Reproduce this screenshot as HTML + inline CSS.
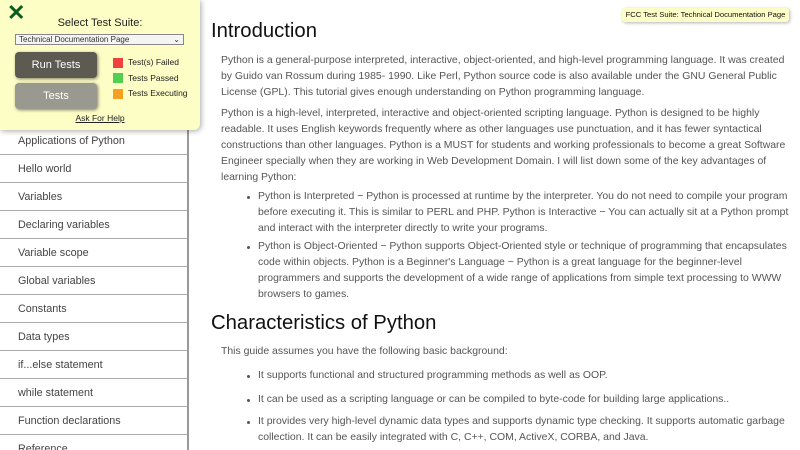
<!DOCTYPE html>
<html style="overflow:hidden"><head><meta charset="utf-8"><style>
*{margin:0;padding:0;box-sizing:border-box}
html,body{width:800px;height:450px;overflow:hidden}
body{background:#fff;font-family:"Liberation Sans",Arial,sans-serif;position:relative}
#nav{position:absolute;left:0;top:0;width:189px;height:450px;border-right:2px solid #999;background:#fff;overflow:hidden}
#nav .hd{position:absolute;left:0;top:8px;width:187px;text-align:center;color:#ccc;font-size:20px;line-height:22px}
.it{position:absolute;left:0;width:187px;height:28px;border-bottom:1px solid #aaa;color:#444;font-size:10.8px;line-height:28px;padding-left:18px}
.l{position:absolute;white-space:nowrap;color:#555;font-size:10.45px;line-height:16px}
.h{position:absolute;left:211px;color:#111;font-size:20.3px;line-height:26px}
.b{position:absolute;width:3px;height:3px;border-radius:50%;background:#555}
#fcc{position:absolute;left:0;top:0;width:200px;height:130px;background:#fdfdc6;box-shadow:1px 1px 6px rgba(0,0,0,.35);border-radius:0 0 6px 0}
.btn{position:absolute;left:15px;width:82px;height:26px;border-radius:4px;color:#fff;font-size:11px;text-align:center;line-height:26px;box-shadow:1px 1px 3px rgba(0,0,0,.5)}
.sq{position:absolute;left:113px;width:10px;height:10px}
.lg{position:absolute;left:128px;font-size:8.5px;color:#222;line-height:10px}
</style></head><body>
<div id="nav">
<div class="hd">PYTHON<br>Documentation</div>
<div class="it" style="top:71px">Introduction</div>
<div class="it" style="top:99px">Characteristics of Python</div>
<div class="it" style="top:127px">Applications of Python</div>
<div class="it" style="top:155px">Hello world</div>
<div class="it" style="top:183px">Variables</div>
<div class="it" style="top:211px">Declaring variables</div>
<div class="it" style="top:239px">Variable scope</div>
<div class="it" style="top:267px">Global variables</div>
<div class="it" style="top:295px">Constants</div>
<div class="it" style="top:323px">Data types</div>
<div class="it" style="top:351px">if...else statement</div>
<div class="it" style="top:379px">while statement</div>
<div class="it" style="top:407px">Function declarations</div>
<div class="it" style="top:435px">Reference</div>
</div>
<div id="fcc">
<div style="position:absolute;left:7px;top:2px;color:#0b5d1e;font-size:22px;font-weight:bold;line-height:22px">✕</div>
<div style="position:absolute;left:0;width:200px;top:17px;text-align:center;font-size:11px;color:#222">Select Test Suite:</div>
<div style="position:absolute;left:15px;top:34px;width:169px;height:11px;border:1px solid #888;background:#f4f4f4;font-size:8px;line-height:9px;padding-left:3px;color:#333">Technical Documentation Page<span style="position:absolute;right:3px">⌄</span></div>
<div class="btn" style="top:52px;background:#5c5a51">Run Tests</div>
<div class="btn" style="top:83px;background:#9a9990">Tests</div>
<div class="sq" style="top:58px;background:#f04040"></div><div class="lg" style="top:57px">Test(s) Failed</div>
<div class="sq" style="top:73px;background:#50d050"></div><div class="lg" style="top:73px">Tests Passed</div>
<div class="sq" style="top:89px;background:#f5a020"></div><div class="lg" style="top:88px">Tests Executing</div>
<div style="position:absolute;left:0;width:200px;top:113px;text-align:center;font-size:8.5px;text-decoration:underline;color:#222">Ask For Help</div>
</div>
<div style="position:absolute;left:622px;top:8px;width:167px;height:14px;background:#fdfdc6;border-radius:3px;box-shadow:1px 1px 3px rgba(0,0,0,.3);font-size:7.6px;line-height:14px;text-align:center;color:#111;white-space:nowrap">FCC Test Suite: Technical Documentation Page</div>

<div class="h" style="top:18px">Introduction</div>
<div class="l" style="left:221px;top:53px">Python is a general-purpose interpreted, interactive, object-oriented, and high-level programming language. It was created</div>
<div class="l" style="left:221px;top:69px">by Guido van Rossum during 1985- 1990. Like Perl, Python source code is also available under the GNU General Public</div>
<div class="l" style="left:221px;top:85px">License (GPL). This tutorial gives enough understanding on Python programming language.</div>
<div class="l" style="left:221px;top:106px">Python is a high-level, interpreted, interactive and object-oriented scripting language. Python is designed to be highly</div>
<div class="l" style="left:221px;top:122px">readable. It uses English keywords frequently where as other languages use punctuation, and it has fewer syntactical</div>
<div class="l" style="left:221px;top:138px">constructions than other languages. Python is a MUST for students and working professionals to become a great Software</div>
<div class="l" style="left:221px;top:154px">Engineer specially when they are working in Web Development Domain. I will list down some of the key advantages of</div>
<div class="l" style="left:221px;top:170px">learning Python:</div>
<div class="b" style="left:247px;top:196px"></div>
<div class="l" style="left:258px;top:189px">Python is Interpreted − Python is processed at runtime by the interpreter. You do not need to compile your program</div>
<div class="l" style="left:258px;top:205px">before executing it. This is similar to PERL and PHP. Python is Interactive − You can actually sit at a Python prompt</div>
<div class="l" style="left:258px;top:221px">and interact with the interpreter directly to write your programs.</div>
<div class="b" style="left:247px;top:246px"></div>
<div class="l" style="left:258px;top:239px">Python is Object-Oriented − Python supports Object-Oriented style or technique of programming that encapsulates</div>
<div class="l" style="left:258px;top:255px">code within objects. Python is a Beginner's Language − Python is a great language for the beginner-level</div>
<div class="l" style="left:258px;top:271px">programmers and supports the development of a wide range of applications from simple text processing to WWW</div>
<div class="l" style="left:258px;top:287px">browsers to games.</div>
<div class="h" style="top:310px">Characteristics of Python</div>
<div class="l" style="left:221px;top:344px">This guide assumes you have the following basic background:</div>
<div class="b" style="left:247px;top:375px"></div>
<div class="l" style="left:258px;top:368px">It supports functional and structured programming methods as well as OOP.</div>
<div class="b" style="left:247px;top:399px"></div>
<div class="l" style="left:258px;top:392px">It can be used as a scripting language or can be compiled to byte-code for building large applications..</div>
<div class="b" style="left:247px;top:421px"></div>
<div class="l" style="left:258px;top:414px">It provides very high-level dynamic data types and supports dynamic type checking. It supports automatic garbage</div>
<div class="l" style="left:258px;top:430px">collection. It can be easily integrated with C, C++, COM, ActiveX, CORBA, and Java.</div>
</body></html>
